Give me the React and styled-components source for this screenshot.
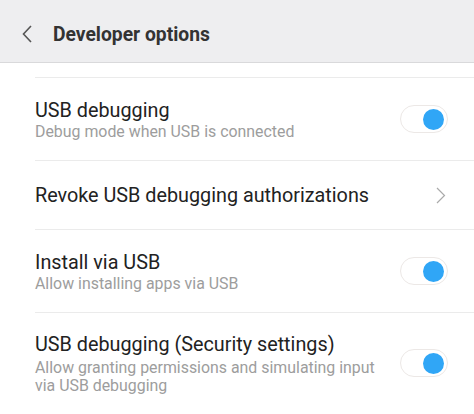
import React from 'react';
import styled, { createGlobalStyle } from 'styled-components';

const GlobalStyle = createGlobalStyle`
  html, body {
    margin: 0;
    padding: 0;
    background: #ffffff;
  }
  body {
    font-family: Roboto, "Noto Sans", "Liberation Sans", sans-serif;
    -webkit-font-smoothing: antialiased;
  }
`;

const items = [
  { title: 'USB debugging', sub: 'Debug mode when USB is connected', toggle: true },
  { title: 'Revoke USB debugging authorizations', link: true },
  { title: 'Install via USB', sub: 'Allow installing apps via USB', toggle: true },
  {
    title: 'USB debugging (Security settings)',
    sub: 'Allow granting permissions and simulating input via USB debugging',
    toggle: true,
  },
];

const App = () => {
  return (
    <Page>
      <GlobalStyle />
      <Header>
        <BackButton>
          <svg width="12" height="18" viewBox="0 0 12 18">
            <path d="M10 1 L2.5 9 L10 17" fill="none" stroke="#555" strokeWidth="1.6" />
          </svg>
        </BackButton>
        <Title>Developer options</Title>
      </Header>
      <List>
        <Spacer />
        {items.map((item) => {
          const tall = item.sub && item.sub.length > 40;
          return (
            <Row key={item.title} $compact={item.link} $tall={tall}>
              <Texts>
                <ItemTitle>{item.title}</ItemTitle>
                {item.sub && <ItemSub $gap={tall}>{item.sub}</ItemSub>}
              </Texts>
              {item.toggle && (
                <Toggle>
                  <Knob />
                </Toggle>
              )}
              {item.link && (
                <Arrow>
                  <svg width="10" height="17" viewBox="0 0 10 17">
                    <path d="M1 1 L8.5 8.5 L1 16" fill="none" stroke="#aaa" strokeWidth="1.2" />
                  </svg>
                </Arrow>
              )}
            </Row>
          );
        })}
      </List>
    </Page>
  );
};

const Page = styled.div`
  width: 474px;
  height: 414px;
  overflow: hidden;
  background: #fff;
`;

const Header = styled.div`
  height: 63px;
  background: #eeeef0;
  border-bottom: 1px solid #d9d9db;
  display: flex;
  align-items: center;
  padding: 6px 0 0 21px;
  box-sizing: border-box;
`;

const BackButton = styled.div`
  width: 12px;
  height: 18px;
  display: flex;
  margin-right: 20px;
`;

const Title = styled.div`
  font-size: 19.3px;
  font-weight: 700;
  color: #333;
`;

const List = styled.div`
  padding-left: 35px;
`;

const Spacer = styled.div`
  height: 14px;
  border-bottom: 1px solid #ebebeb;
`;

const Row = styled.div`
  display: flex;
  align-items: center;
  justify-content: space-between;
  padding-right: 26px;
  height: ${(p) => (p.$compact ? '68px' : p.$tall ? '100px' : '82px')};
  border-bottom: 1px solid #ebebeb;

  &:last-child {
    border-bottom: none;
  }
`;

const Texts = styled.div`
  display: flex;
  flex-direction: column;
  max-width: 350px;
`;

const ItemTitle = styled.div`
  font-size: 19.8px;
  line-height: 25px;
  color: #222;
`;

const ItemSub = styled.div`
  font-size: 15.9px;
  line-height: 18px;
  color: #9d9d9d;
  margin-top: ${(p) => (p.$gap ? '2px' : '0')};
`;

const Toggle = styled.div`
  width: 48px;
  height: 28px;
  border: 1px solid #ece8e6;
  border-radius: 14px;
  box-sizing: border-box;
  display: flex;
  align-items: center;
  justify-content: flex-end;
  padding-right: 3px;
  background: #fff;
`;

const Knob = styled.div`
  width: 21px;
  height: 21px;
  border-radius: 50%;
  background: #30a6f6;
`;

const Arrow = styled.div`
  display: flex;
  margin-right: 2px;
`;

export default App;
